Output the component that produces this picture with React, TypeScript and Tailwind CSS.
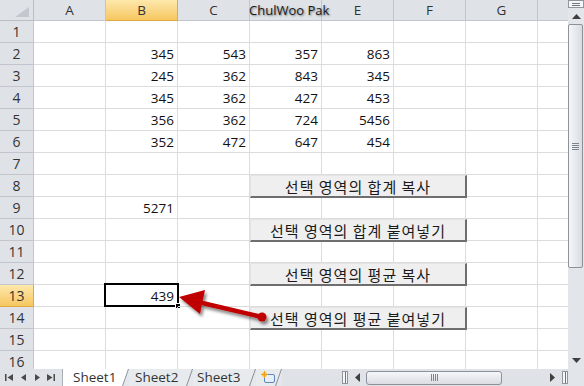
import React from "react";

const COLS = ["A", "B", "C", "D", "E", "F", "G"];
const ROWS = Array.from({ length: 16 }, (_, i) => i + 1);

const DATA: Record<number, Record<string, string>> = {
  2: { B: "345", C: "543", D: "357", E: "863" },
  3: { B: "245", C: "362", D: "843", E: "345" },
  4: { B: "345", C: "362", D: "427", E: "453" },
  5: { B: "356", C: "362", D: "724", E: "5456" },
  6: { B: "352", C: "472", D: "647", E: "454" },
  9: { B: "5271" },
  13: { B: "439" },
};

const BUTTONS = [
  { label: "선택 영역의 합계 복사", pos: "top-[175px]" },
  { label: "선택 영역의 합계 붙여넣기", pos: "top-[219px]" },
  { label: "선택 영역의 평균 복사", pos: "top-[263px]" },
  { label: "선택 영역의 평균 붙여넣기", pos: "top-[307px]" },
];

const TABS = [
  { label: "Sheet1", w: "w-[66px]", pl: "pl-[10px]", active: true, width: 66 },
  { label: "Sheet2", w: "w-[64px]", pl: "pl-[6px]", active: false, width: 64 },
  { label: "Sheet3", w: "w-[63px]", pl: "pl-[4px]", active: false, width: 63 },
];

function HeaderRow() {
  return (
    <div className="flex h-[21px]">
      {/* corner */}
      <div className="w-[34px] shrink-0 bg-[#dfe3e8] border-r border-b border-[#b9bec4] flex items-end justify-end pr-[4px] pb-[3px]">
        <svg width="14" height="10">
          <polygon points="14,0 14,10 0,10" fill="#c3c8ce" />
        </svg>
      </div>
      {COLS.map((c) => (
        <div
          key={c}
          className={
            c === "B"
              ? "w-[72px] shrink-0 bg-linear-to-b from-[#fde8ab] to-[#f6c75e] border-r border-b border-[#e2a845] flex items-center justify-center text-[13.5px] text-[#333]"
              : "w-[72px] shrink-0 bg-[#dfe3e8] border-r border-b border-[#c2c6cc] flex items-center justify-center text-[13.5px] text-[#333]"
          }
        >
          {c === "D" ? "" : c}
        </div>
      ))}
      <div className="w-[30px] shrink-0 bg-[#dfe3e8] border-b border-[#c2c6cc]" />
    </div>
  );
}

function Row({ r }: { r: number }) {
  const vals = DATA[r] || {};
  return (
    <div className="flex h-[22px]">
      <div
        className={
          r === 13
            ? "w-[34px] shrink-0 bg-linear-to-b from-[#fde8ab] to-[#f6c75e] border-r border-b border-[#e2a845] flex items-center justify-center text-[14px] text-[#333]"
            : "w-[34px] shrink-0 bg-[#dfe3e8] border-r border-b border-[#c2c6cc] flex items-center justify-center text-[14px] text-[#333]"
        }
      >
        {r}
      </div>
      {COLS.map((c) => (
        <div
          key={c}
          className="relative w-[72px] shrink-0 border-r border-b border-[#dadcdd] flex items-end justify-end pr-[3px] pb-[3px] text-[13.5px] leading-none text-[#111]"
        >
          {vals[c] || ""}
          {r === 13 && c === "B" && (
            <div className="absolute -left-[2px] -top-[2px] -right-[2px] -bottom-[1px] border-2 border-black">
              <div className="absolute -right-[4px] -bottom-[4px] w-[6px] h-[6px] bg-black border border-white" />
            </div>
          )}
        </div>
      ))}
      <div className="w-[30px] shrink-0 border-b border-[#dadcdd]" />
    </div>
  );
}

function Arrow() {
  return (
    <svg className="absolute left-0 top-0 pointer-events-none" width="568" height="369">
      <defs>
        <filter id="sh" x="-20%" y="-40%" width="150%" height="200%">
          <feDropShadow dx="2" dy="3" stdDeviation="1.5" floodColor="#000" floodOpacity="0.45" />
        </filter>
      </defs>
      <g filter="url(#sh)">
        <line x1="262" y1="317" x2="198" y2="302" stroke="#c00000" strokeWidth="4.5" strokeLinecap="round" />
        <polygon points="179,297 205,290 200,314" fill="#c00000" />
        <circle cx="262" cy="317" r="4.5" fill="#c00000" />
      </g>
    </svg>
  );
}

function VScroll() {
  return (
    <div className="w-[16px] h-[369px] shrink-0 bg-[#e2e5e9] flex flex-col">
      {/* split box */}
      <div className="w-[16px] h-[8px] bg-[#f6f7f8] border border-[#8f959c] flex items-center justify-center">
        <div className="w-[8px] h-[3px] border-t border-b border-[#6f767e]" />
      </div>
      <div className="h-[16px] flex items-center justify-center">
        <svg width="9" height="5">
          <polygon points="0,5 4.5,0 9,5" fill="#3f3f3f" />
        </svg>
      </div>
      <div className="w-[15px] h-[244px] rounded-[2px] border border-[#8b929a] bg-linear-to-r from-[#f5f6f8] to-[#d9dde2] flex items-center justify-center">
        <div className="w-[7px] flex flex-col gap-[1px]">
          <div className="h-[1px] bg-[#7d848c]" />
          <div className="h-[1px] bg-[#7d848c]" />
          <div className="h-[1px] bg-[#7d848c]" />
          <div className="h-[1px] bg-[#7d848c]" />
        </div>
      </div>
      <div className="flex-1" />
      <div className="h-[17px] flex items-center justify-center">
        <svg width="9" height="5">
          <polygon points="0,0 4.5,5 9,0" fill="#3f3f3f" />
        </svg>
      </div>
    </div>
  );
}

function Splitter() {
  return (
    <div className="w-[6px] h-[13px] bg-[#f6f7f8] border border-[#8f959c] flex justify-center">
      <div className="w-[1px] h-full bg-[#6f767e]" />
    </div>
  );
}

function TabShape({ width, fill }: { width: number; fill: string }) {
  return (
    <svg className="absolute left-0 top-0" width={width} height="17">
      <polygon points={`${width},0 ${width},17 ${width - 6},17`} fill="#e4e7eb" />
      <polygon points={`0,0 ${width},0 ${width - 6},17 0,17`} fill={fill} />
      <line x1={width - 0.5} y1="0" x2={width - 6.5} y2="17" stroke="#8b9097" strokeWidth="1" />
    </svg>
  );
}

function TabBar() {
  return (
    <div className="flex h-[17px] bg-[#dfe3e8]">
      {/* nav buttons */}
      <div className="w-[63px] shrink-0 flex items-center pl-[2px] border-r border-[#a9afb6]">
        <div className="w-[14px] flex justify-center">
          <svg width="8" height="7">
            <rect x="0" y="0" width="1.5" height="7" fill="#4a4a4a" />
            <polygon points="8,0 2.5,3.5 8,7" fill="#4a4a4a" />
          </svg>
        </div>
        <div className="w-[14px] flex justify-center">
          <svg width="5" height="7">
            <polygon points="5,0 0,3.5 5,7" fill="#4a4a4a" />
          </svg>
        </div>
        <div className="w-[14px] flex justify-center">
          <svg width="5" height="7">
            <polygon points="0,0 5,3.5 0,7" fill="#4a4a4a" />
          </svg>
        </div>
        <div className="w-[14px] flex justify-center">
          <svg width="8" height="7">
            <polygon points="0,0 5.5,3.5 0,7" fill="#4a4a4a" />
            <rect x="6.5" y="0" width="1.5" height="7" fill="#4a4a4a" />
          </svg>
        </div>
      </div>
      {/* sheet tabs */}
      {TABS.map((t) => (
        <div key={t.label} className={`relative shrink-0 h-[17px] ${t.w}`}>
          <TabShape width={t.width} fill={t.active ? "#ffffff" : "#e8ebee"} />
          <span className={`relative flex h-full items-center text-[13.5px] leading-none text-[#333] ${t.pl}`}>
            {t.label}
          </span>
        </div>
      ))}
      <div className="relative shrink-0 w-[26px] h-[17px]">
        <TabShape width={26} fill="#e8ebee" />
        <svg className="absolute left-[5px] top-[2px]" width="14" height="13">
          <rect x="3.5" y="3.5" width="10" height="8" rx="1.5" fill="#e6eef8" stroke="#5f86bd" />
          <circle cx="3.5" cy="3.5" r="2.5" fill="#f7c23b" />
          <path d="M3.5 0 V7 M0 3.5 H7" stroke="#f0a11a" strokeWidth="1" />
        </svg>
      </div>
      <div className="w-[60px] shrink-0" />
      {/* horizontal scrollbar */}
      <div className="w-[7px] shrink-0 flex items-center">
        <Splitter />
      </div>
      <div className="w-[17px] shrink-0 flex items-center justify-center">
        <svg width="5" height="9">
          <polygon points="5,0 0,4.5 5,9" fill="#3f3f3f" />
        </svg>
      </div>
      <div className="w-[136px] shrink-0 flex items-center">
        <div className="w-full h-[14px] rounded-[3px] border border-[#8b929a] bg-linear-to-b from-[#f6f7f9] to-[#d9dde2] flex items-center justify-center">
          <div className="flex gap-[1px] h-[7px]">
            <div className="w-[1px] bg-[#7d848c]" />
            <div className="w-[1px] bg-[#7d848c]" />
            <div className="w-[1px] bg-[#7d848c]" />
            <div className="w-[1px] bg-[#7d848c]" />
          </div>
        </div>
      </div>
      <div className="w-[43px] shrink-0" />
      <div className="w-[14px] shrink-0 flex items-center justify-center">
        <svg width="5" height="9">
          <polygon points="0,0 5,4.5 0,9" fill="#3f3f3f" />
        </svg>
      </div>
      <div className="w-[3px] shrink-0" />
      <div className="w-[6px] shrink-0 flex items-center">
        <Splitter />
      </div>
      <div className="w-[16px] shrink-0 bg-[#e2e5e9]" />
    </div>
  );
}

export default function App() {
  return (
    <div className="w-[584px] h-[386px] overflow-hidden bg-white flex flex-col [font-family:'Open_Sans','Liberation_Sans',sans-serif]">
      <div className="flex h-[369px]">
        <div className="relative w-[568px] h-[369px] shrink-0 overflow-hidden">
          <HeaderRow />
          {ROWS.map((r) => (
            <Row key={r} r={r} />
          ))}

          {/* author label over the header */}
          <span className="absolute left-[249px] top-[1px] text-[13px] leading-[18px] text-[#1a1a1a] [text-shadow:1px_1px_2px_rgba(0,0,0,0.45)]">
            ChulWoo Pak
          </span>

          {/* form buttons */}
          {BUTTONS.map((b) => (
            <div
              key={b.label}
              className={`absolute left-[250px] w-[217px] h-[23px] ${b.pos} bg-[#efefef] border-t border-l border-[#e4e4e4] border-r-2 border-b-2 border-r-[#6e6e6e] border-b-[#6e6e6e] flex items-center justify-center text-[15px] tracking-[1px] leading-none text-[#1a1a1a] [font-family:'Noto_Sans_CJK_KR',sans-serif]`}
            >
              {b.label}
            </div>
          ))}

          <Arrow />
        </div>
        <VScroll />
      </div>
      <TabBar />
    </div>
  );
}
